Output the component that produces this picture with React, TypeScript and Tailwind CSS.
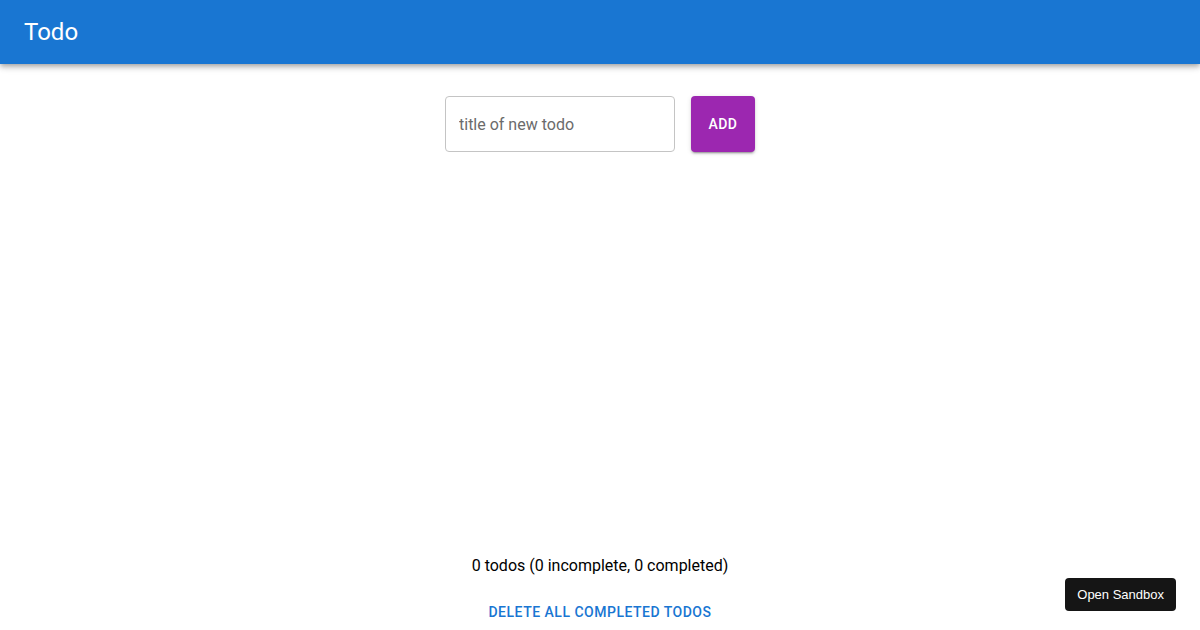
import { useState } from "react";

export default function App() {
    const [title, setTitle] = useState("");

    return (
        <div className="flex flex-col h-[630px] bg-white font-['Roboto',sans-serif] text-black">
            {/* App bar */}
            <header className="h-16 shrink-0 flex items-center px-6 bg-[#1976d2] text-white shadow-[0_2px_4px_-1px_rgba(0,0,0,0.2),0_4px_5px_0_rgba(0,0,0,0.14),0_1px_10px_0_rgba(0,0,0,0.12)] relative z-10">
                <h1 className="text-2xl font-normal leading-8">Todo</h1>
            </header>

            {/* New todo form */}
            <main className="flex-1 pt-8">
                <form className="flex justify-center gap-4" onSubmit={(e) => e.preventDefault()}>
                    <input
                        value={title}
                        onChange={(e) => setTitle(e.target.value)}
                        placeholder="title of new todo"
                        className="w-[230px] h-14 px-[13px] rounded border border-[#c4c4c4] text-base outline-none placeholder:text-[#6b6b6b] focus:border-[#1976d2]"
                    />
                    <button
                        type="submit"
                        className="w-16 h-14 rounded bg-[#9c27b0] text-white text-sm font-medium tracking-[0.4px] uppercase shadow-[0_3px_1px_-2px_rgba(0,0,0,0.2),0_2px_2px_0_rgba(0,0,0,0.14),0_1px_5px_0_rgba(0,0,0,0.12)]"
                    >
                        Add
                    </button>
                </form>
            </main>

            {/* Footer */}
            <footer className="flex flex-col items-center gap-4">
                <p className="text-base leading-6">0 todos (0 incomplete, 0 completed)</p>
                <button className="h-9 px-2 text-sm font-medium tracking-[0.5px] uppercase text-[#1976d2] rounded">
                    Delete all completed todos
                </button>
            </footer>

            <div className="fixed right-6 bottom-[19px] h-[33px] px-3 flex items-center rounded bg-[#151515] text-white text-[13px] font-['Liberation_Sans',sans-serif]">
                Open Sandbox
            </div>
        </div>
    );
}
